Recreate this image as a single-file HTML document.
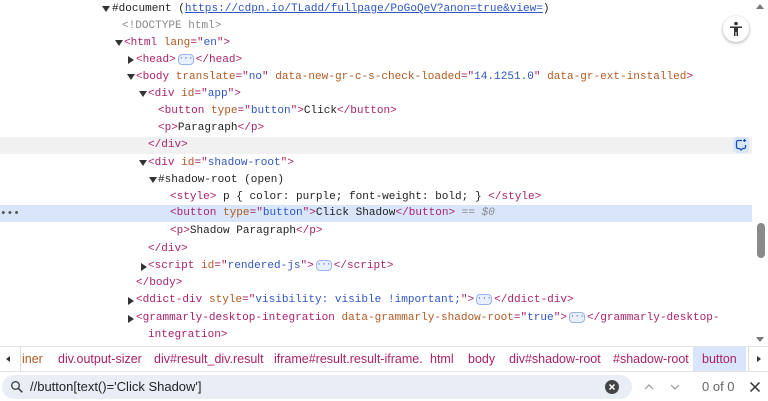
<!DOCTYPE html>
<html><head><style>
body{margin:0;width:768px;height:401px;background:#fff;overflow:hidden;position:relative;font-family:"Liberation Mono",monospace;font-size:11.05px;color:#1f1f1f}
.l{position:absolute;white-space:pre;line-height:17px;height:17px;margin-top:1px}
.t{color:#a8226a}.a{color:#b05a24}.v{color:#2f55c4}.g{color:#8a8a8a}
.ar{position:absolute;width:0;height:0;margin-top:1px}
.dn{border-left:4px solid transparent;border-right:4px solid transparent;border-top:6px solid #333}
.rt{border-top:4px solid transparent;border-bottom:4px solid transparent;border-left:6px solid #333}
.dots{display:inline-block;width:14px;height:9px;border:1px solid #9bb4e8;border-radius:4px;background:#e8efff;vertical-align:middle;font-size:8px;line-height:7px;text-align:center;color:#2f55c4;margin:0 2px}
.bc{position:absolute;top:347px;font-family:"Liberation Sans",sans-serif;font-size:12.5px;line-height:24px;color:#a8226a}
</style></head><body>
<div style="position:absolute;left:0;top:137px;width:752px;height:17px;background:#f1f1f1"></div>
<div style="position:absolute;left:0;top:205px;width:752px;height:17px;background:#d8e5fb"></div>
<div class="l" style="left:0;top:205px;color:#555">•••</div>

<div class="ar dn" style="left:102px;top:5px"></div>
<div class="l" style="left:112px;top:0">#document (<span class="v" style="text-decoration:underline">https://cdpn.io/TLadd/fullpage/PoGoQeV?anon=true&amp;view=</span>)</div>
<div class="l g" style="left:122px;top:17px">&lt;!DOCTYPE html&gt;</div>
<div class="ar dn" style="left:115px;top:39px"></div>
<div class="l" style="left:124px;top:34px"><span class="t">&lt;html</span> <span class="a">lang</span><span class="t">="</span><span class="v">en</span><span class="t">"&gt;</span></div>
<div class="ar rt" style="left:128px;top:55px"></div>
<div class="l" style="left:136px;top:51px"><span class="t">&lt;head&gt;</span><span class="dots">···</span><span class="t">&lt;/head&gt;</span></div>
<div class="ar dn" style="left:127px;top:73px"></div>
<div class="l" style="left:136px;top:68px"><span class="t">&lt;body</span> <span class="a">translate</span><span class="t">="</span><span class="v">no</span><span class="t">"</span> <span class="a">data-new-gr-c-s-check-loaded</span><span class="t">="</span><span class="v">14.1251.0</span><span class="t">"</span> <span class="a">data-gr-ext-installed</span><span class="t">&gt;</span></div>
<div class="ar dn" style="left:139px;top:90px"></div>
<div class="l" style="left:148px;top:85px"><span class="t">&lt;div</span> <span class="a">id</span><span class="t">="</span><span class="v">app</span><span class="t">"&gt;</span></div>
<div class="l" style="left:158px;top:102px"><span class="t">&lt;button</span> <span class="a">type</span><span class="t">="</span><span class="v">button</span><span class="t">"&gt;</span>Click<span class="t">&lt;/button&gt;</span></div>
<div class="l" style="left:158px;top:119px"><span class="t">&lt;p&gt;</span>Paragraph<span class="t">&lt;/p&gt;</span></div>
<div class="l" style="left:148px;top:136px"><span class="t">&lt;/div&gt;</span></div>
<div class="ar dn" style="left:139px;top:159px"></div>
<div class="l" style="left:148px;top:154px"><span class="t">&lt;div</span> <span class="a">id</span><span class="t">="</span><span class="v">shadow-root</span><span class="t">"&gt;</span></div>
<div class="ar dn" style="left:149px;top:176px"></div>
<div class="l" style="left:158px;top:171px">#shadow-root (open)</div>
<div class="l" style="left:170px;top:188px"><span class="t">&lt;style&gt;</span> p { color: purple; font-weight: bold; } <span class="t">&lt;/style&gt;</span></div>
<div class="l" style="left:170px;top:204px"><span class="t">&lt;button</span> <span class="a">type</span><span class="t">="</span><span class="v">button</span><span class="t">"&gt;</span>Click Shadow<span class="t">&lt;/button&gt;</span> <span class="g" style="font-style:italic">== $0</span></div>
<div class="l" style="left:170px;top:222px"><span class="t">&lt;p&gt;</span>Shadow Paragraph<span class="t">&lt;/p&gt;</span></div>
<div class="l" style="left:148px;top:240px"><span class="t">&lt;/div&gt;</span></div>
<div class="ar rt" style="left:141px;top:262px"></div>
<div class="l" style="left:148px;top:257px"><span class="t">&lt;script</span> <span class="a">id</span><span class="t">="</span><span class="v">rendered-js</span><span class="t">"&gt;</span><span class="dots">···</span><span class="t">&lt;/script&gt;</span></div>
<div class="l" style="left:136px;top:274px"><span class="t">&lt;/body&gt;</span></div>
<div class="ar rt" style="left:128px;top:296px"></div>
<div class="l" style="left:136px;top:291px"><span class="t">&lt;ddict-div</span> <span class="a">style</span><span class="t">="</span><span class="v">visibility: visible !important;</span><span class="t">"&gt;</span><span class="dots">···</span><span class="t">&lt;/ddict-div&gt;</span></div>
<div class="ar rt" style="left:128px;top:314px"></div>
<div class="l" style="left:136px;top:309px"><span class="t">&lt;grammarly-desktop-integration</span> <span class="a">data-grammarly-shadow-root</span><span class="t">="</span><span class="v">true</span><span class="t">"&gt;</span><span class="dots">···</span><span class="t">&lt;/grammarly-desktop-</span></div>
<div class="l" style="left:148px;top:326px"><span class="t">integration&gt;</span></div>

<div style="position:absolute;left:723px;top:16px;width:26px;height:26px;border-radius:50%;background:#fff;box-shadow:0 1px 3px rgba(0,0,0,.35)">
<svg width="26" height="26" viewBox="0 0 26 26"><circle cx="13" cy="7.5" r="1.8" fill="#333"/><path d="M7 10.5h12v1.5h-4v8h-1.5v-4h-1v4H11v-8H7z" fill="#333"/></svg></div>
<div style="position:absolute;left:733px;top:137px;width:16px;height:16px;border-radius:4px;background:#d8e5fb">
<svg width="16" height="16" viewBox="0 0 16 16"><path d="M9 3.5H5a1.5 1.5 0 0 0-1.5 1.5v5a1.5 1.5 0 0 0 1.5 1.5h1.5l1.5 1.5 1.5-1.5h1.5a1.5 1.5 0 0 0 1.5-1.5V8" fill="none" stroke="#1a4fb0" stroke-width="1.3"/><path d="M11.5 2v3M10 3.5h3" stroke="#1a4fb0" stroke-width="1.2"/></svg></div>

<div style="position:absolute;left:752px;top:0;width:16px;height:346px;background:#fff"></div>
<div class="ar" style="left:756px;top:3px;border-left:4px solid transparent;border-right:4px solid transparent;border-bottom:5px solid #777"></div>
<div style="position:absolute;left:757px;top:223px;width:8px;height:35px;border-radius:4px;background:#8a8a8a"></div>
<div class="ar" style="left:756px;top:336px;border-left:4px solid transparent;border-right:4px solid transparent;border-top:5px solid #777"></div>

<div style="position:absolute;left:0;top:346px;width:768px;height:1px;background:#e3e3e3"></div>
<div style="position:absolute;left:0;top:347px;width:768px;height:24px;background:#fff"></div>
<div style="position:absolute;left:0;top:347px;width:20px;height:24px;border-right:1px solid #ddd"></div>
<div class="ar" style="left:6px;top:355px;border-top:3px solid transparent;border-bottom:3px solid transparent;border-right:4px solid #333"></div>
<div class="bc" style="left:22px;color:#b05a24">iner</div>
<div class="bc" style="left:58px">div.output-sizer</div>
<div class="bc" style="left:154px">div#result_div.result</div>
<div class="bc" style="left:274px">iframe#result.result-iframe.</div>
<div class="bc" style="left:430px">html</div>
<div class="bc" style="left:468px">body</div>
<div class="bc" style="left:509px">div#shadow-root</div>
<div class="bc" style="left:613px">#shadow-root</div>
<div style="position:absolute;left:693px;top:347px;width:53px;height:24px;background:#d8e5fb"></div>
<div class="bc" style="left:702px">button</div>
<div style="position:absolute;left:748px;top:347px;width:20px;height:24px;border-left:1px solid #ddd"></div>
<div class="ar" style="left:757px;top:355px;border-top:3px solid transparent;border-bottom:3px solid transparent;border-left:4px solid #333"></div>
<div style="position:absolute;left:0;top:371px;width:768px;height:1px;background:#e3e3e3"></div>

<div style="position:absolute;left:2px;top:375px;width:630px;height:24px;border-radius:12px;background:#e9eef6"></div>
<svg style="position:absolute;left:10px;top:380px" width="14" height="14" viewBox="0 0 14 14"><circle cx="5.5" cy="5.5" r="3.8" fill="none" stroke="#444" stroke-width="1.4"/><path d="M8.3 8.3l4 4" stroke="#444" stroke-width="1.6"/></svg>
<div style="position:absolute;left:30px;top:375px;font-family:'Liberation Sans',sans-serif;font-size:13px;line-height:24px;color:#222">//button[text()='Click Shadow']</div>
<svg style="position:absolute;left:605px;top:380px" width="14" height="14" viewBox="0 0 14 14"><circle cx="7" cy="7" r="7" fill="#444"/><path d="M4.5 4.5l5 5M9.5 4.5l-5 5" stroke="#fff" stroke-width="1.5"/></svg>
<svg style="position:absolute;left:643px;top:381px" width="40" height="12" viewBox="0 0 40 12"><path d="M2 8l4-4 4 4" fill="none" stroke="#999" stroke-width="1.2"/><path d="M28 4l4 4 4-4" fill="none" stroke="#999" stroke-width="1.2"/></svg>
<div style="position:absolute;left:702px;top:375px;font-family:'Liberation Sans',sans-serif;font-size:13px;line-height:24px;color:#666">0 of 0</div>
<svg style="position:absolute;left:749px;top:381px" width="12" height="12" viewBox="0 0 12 12"><path d="M1.5 1.5l9 9M10.5 1.5l-9 9" stroke="#333" stroke-width="1.5"/></svg>
</body></html>
